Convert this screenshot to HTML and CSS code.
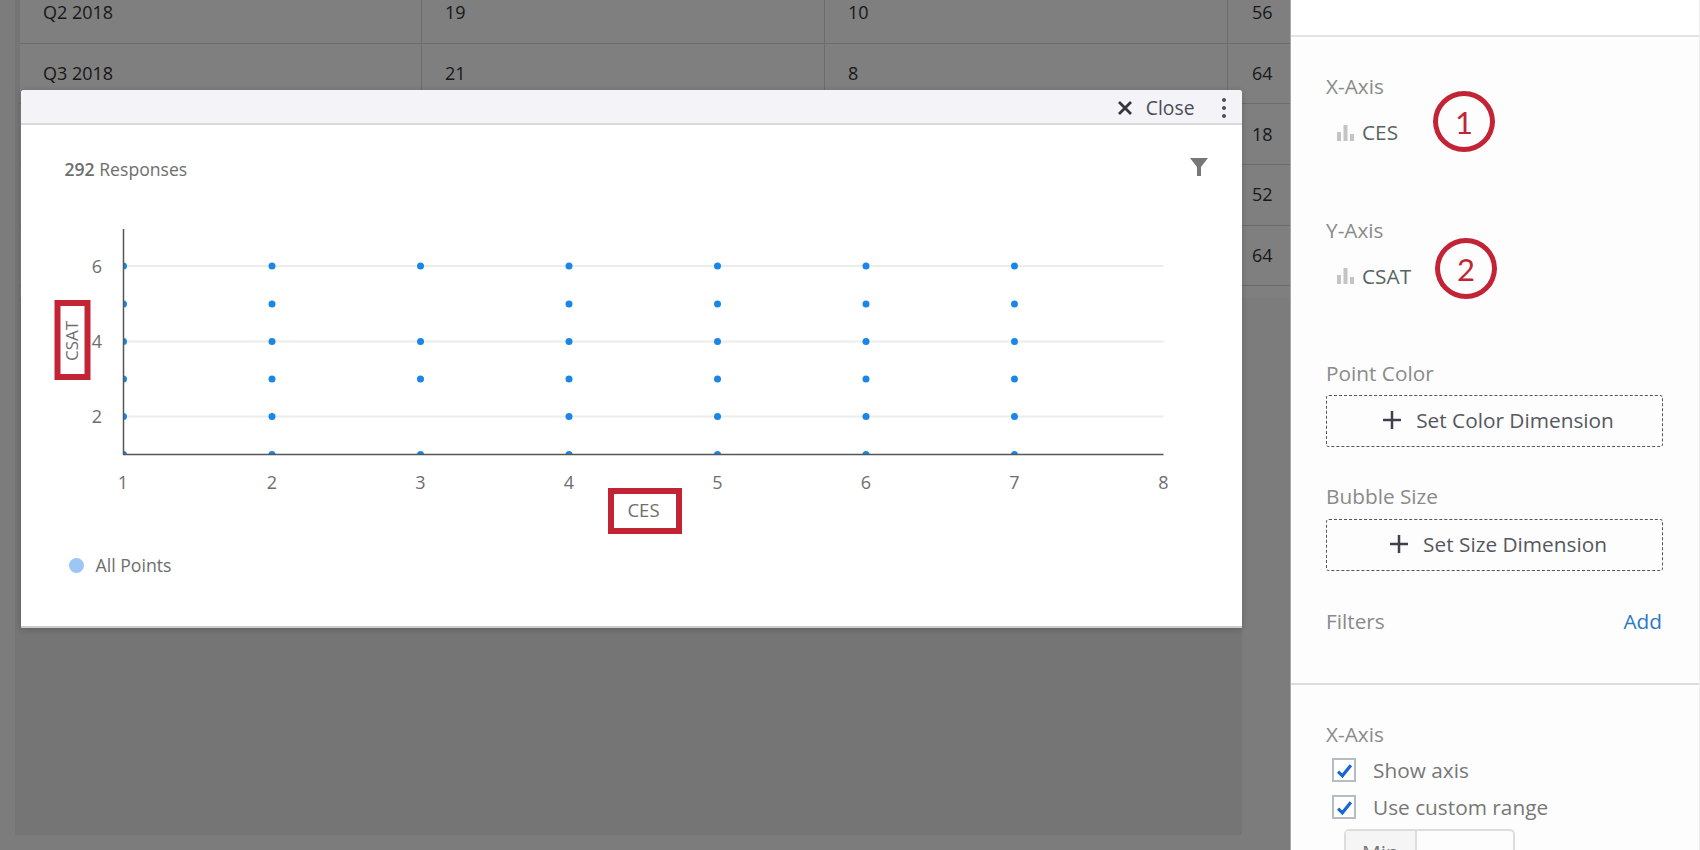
FILE: index.html
```html
<!DOCTYPE html>
<html lang="en">
<head>
<meta charset="utf-8">
<title>Scatter plot</title>
<link rel="stylesheet" href="styles.css">
</head>
<body>
<div class="app">
  <main class="main">
    <div class="content">
      <div class="table">
        <div class="cell">Q2 2018</div><div class="cell">19</div><div class="cell">10</div><div class="cell">56</div>
        <div class="cell">Q3 2018</div><div class="cell">21</div><div class="cell">8</div><div class="cell">64</div>
        <div class="cell"></div><div class="cell"></div><div class="cell"></div><div class="cell">18</div>
        <div class="cell"></div><div class="cell"></div><div class="cell"></div><div class="cell">52</div>
        <div class="cell"></div><div class="cell"></div><div class="cell"></div><div class="cell">64</div>
        <div class="cell short"></div><div class="cell short"></div><div class="cell short"></div><div class="cell short"></div>
      </div>
    </div>
    <div class="overlay"></div>
    <section class="modal">
      <header class="modal-head">
        <svg class="x-icon" viewBox="0 0 14 14"><path d="M1 1l12 12M13 1L1 13"/></svg>
        <span class="close-text">Close</span>
        <svg class="kebab" viewBox="0 0 4 20"><circle cx="2" cy="2" r="2"/><circle cx="2" cy="10" r="2"/><circle cx="2" cy="18" r="2"/></svg>
      </header>
      <div class="modal-body">
        <div class="resp-row">
          <p class="responses"><b>292</b> Responses</p>
          <svg class="funnel" viewBox="0 0 18 18"><path d="M0 0h18l-7 9v9H7V9z"/></svg>
        </div>
        <svg class="chart" viewBox="0 0 1221 370" width="1221" height="370">
          <g class="grid">
            <line x1="102" y1="141" x2="1142.5" y2="141"/>
            <line x1="102" y1="216.5" x2="1142.5" y2="216.5"/>
            <line x1="102" y1="291.5" x2="1142.5" y2="291.5"/>
          </g>
          <defs><clipPath id="plot"><rect x="102" y="100" width="1100" height="229.5"/></clipPath></defs>
          <g class="dots" clip-path="url(#plot)">
            <circle cx="102.5" cy="141" r="3.5"/><circle cx="251" cy="141" r="3.5"/><circle cx="399.5" cy="141" r="3.5"/><circle cx="548" cy="141" r="3.5"/><circle cx="696.5" cy="141" r="3.5"/><circle cx="845" cy="141" r="3.5"/><circle cx="993.5" cy="141" r="3.5"/>
            <circle cx="102.5" cy="179" r="3.5"/><circle cx="251" cy="179" r="3.5"/><circle cx="548" cy="179" r="3.5"/><circle cx="696.5" cy="179" r="3.5"/><circle cx="845" cy="179" r="3.5"/><circle cx="993.5" cy="179" r="3.5"/>
            <circle cx="102.5" cy="216.5" r="3.5"/><circle cx="251" cy="216.5" r="3.5"/><circle cx="399.5" cy="216.5" r="3.5"/><circle cx="548" cy="216.5" r="3.5"/><circle cx="696.5" cy="216.5" r="3.5"/><circle cx="845" cy="216.5" r="3.5"/><circle cx="993.5" cy="216.5" r="3.5"/>
            <circle cx="102.5" cy="254" r="3.5"/><circle cx="251" cy="254" r="3.5"/><circle cx="399.5" cy="254" r="3.5"/><circle cx="548" cy="254" r="3.5"/><circle cx="696.5" cy="254" r="3.5"/><circle cx="845" cy="254" r="3.5"/><circle cx="993.5" cy="254" r="3.5"/>
            <circle cx="102.5" cy="291.5" r="3.5"/><circle cx="251" cy="291.5" r="3.5"/><circle cx="548" cy="291.5" r="3.5"/><circle cx="696.5" cy="291.5" r="3.5"/><circle cx="845" cy="291.5" r="3.5"/><circle cx="993.5" cy="291.5" r="3.5"/>
            <circle cx="102.5" cy="329.5" r="3.5"/><circle cx="251" cy="329.5" r="3.5"/><circle cx="399.5" cy="329.5" r="3.5"/><circle cx="548" cy="329.5" r="3.5"/><circle cx="696.5" cy="329.5" r="3.5"/><circle cx="845" cy="329.5" r="3.5"/><circle cx="993.5" cy="329.5" r="3.5"/>
          </g>
          <g class="axes">
            <line x1="102.5" y1="104" x2="102.5" y2="329.5"/>
            <line x1="102" y1="329.5" x2="1142.5" y2="329.5"/>
          </g>
          <g class="ticks">
            <text x="76" y="147.5">6</text><text x="76" y="223">4</text><text x="76" y="298">2</text>
            <text x="102" y="363.5">1</text><text x="251" y="363.5">2</text><text x="399.5" y="363.5">3</text><text x="548" y="363.5">4</text><text x="696.5" y="363.5">5</text><text x="845" y="363.5">6</text><text x="993.5" y="363.5">7</text><text x="1142.5" y="363.5">8</text>
          </g>
          <text class="axis-title" transform="translate(57 216) rotate(-90)">CSAT</text>
          <rect class="mark" x="36.5" y="178" width="30" height="74"/>
        </svg>
        <div class="ces-box">CES</div>
        <div class="legend"><span class="legend-dot"></span><span>All Points</span></div>
      </div>
    </section>
  </main>
  <aside class="side">
    <div class="side-top"></div>
    <div class="side-data">
      <div class="pick pick-x">
        <h3 class="label">X-Axis</h3>
        <div class="field-row">
          <svg class="bars" viewBox="0 0 17 16"><path d="M0 7h4v9H0zM6.5 0h4v16h-4zM13 9h4v7h-4z"/></svg>
          <span class="field">CES</span>
          <span class="callout callout-1">1</span>
        </div>
      </div>
      <div class="pick pick-y">
        <h3 class="label">Y-Axis</h3>
        <div class="field-row">
          <svg class="bars" viewBox="0 0 17 16"><path d="M0 7h4v9H0zM6.5 0h4v16h-4zM13 9h4v7h-4z"/></svg>
          <span class="field">CSAT</span>
          <span class="callout callout-2">2</span>
        </div>
      </div>
      <h3 class="label">Point Color</h3>
      <button class="dash dash-color"><svg class="plus" viewBox="0 0 18 18"><path d="M9 0v18M0 9h18"/></svg>Set Color Dimension</button>
      <h3 class="label label-bs">Bubble Size</h3>
      <button class="dash dash-size"><svg class="plus" viewBox="0 0 18 18"><path d="M9 0v18M0 9h18"/></svg>Set Size Dimension</button>
      <div class="filters"><h3 class="label">Filters</h3><a class="add">Add</a></div>
    </div>
    <div class="side-axis">
      <h3 class="label">X-Axis</h3>
      <label class="check"><span class="box"><svg viewBox="0 0 16 14"><path d="M2 8l4 4 8-10"/></svg></span>Show axis</label>
      <label class="check"><span class="box"><svg viewBox="0 0 16 14"><path d="M2 8l4 4 8-10"/></svg></span>Use custom range</label>
      <div class="range"><span class="range-key">Min</span><span class="range-val"></span></div>
    </div>
  </aside>
</div>
</body>
</html>
```
FILE: styles.css
```css
* { box-sizing: border-box; }
html, body { margin: 0; height: 850px; overflow: hidden; }
body { font-family: "Open Sans", sans-serif; background: #f6f6f6; }
h3, p { margin: 0; font-weight: 400; }

.app { display: flex; width: 1700px; height: 850px; overflow: hidden; }

.main { position: relative; width: 1291px; height: 850px; overflow: hidden; background: #f8f8f8; }
.content { display: flow-root; margin-left: 15px; width: 1227px; height: 835px; background: #ebebeb; padding-left: 5px; }
.table {
  margin-top: -17px;
  width: 1271px;
  display: grid;
  grid-template-columns: 402px 403px 403px 63px;
  grid-template-rows: repeat(5, 60.7px) 12px;
  background: #fff;
  font-size: 18px;
  color: #333;
}
.cell {
  display: flex; align-items: center;
  padding: 0 0 1px 23px;
  border-bottom: 1px solid #d9d9d9;
  border-right: 1px solid #d9d9d9;
}
.cell:nth-child(4n) { border-right: 0; padding-left: 24px; }
.cell.short { border-bottom: 0; border-right: 0; }

.overlay { position: absolute; inset: 0; background: rgba(0, 0, 0, .5); }

.modal {
  position: absolute; left: 20.5px; top: 90px; width: 1221px; height: 538px;
  background: #fff; border-radius: 3px 3px 0 0;
  border-bottom: 2px solid #ccc;
  box-shadow: 0 1px 6px rgba(0, 0, 0, .2);
}
.modal-head {
  height: 35px; display: flex; align-items: center; justify-content: flex-end;
  background: #f3f3f8; border-bottom: 2px solid #d9d9d9; border-radius: 3px 3px 0 0;
  padding: 3px 16px 0 0;
}
.x-icon { width: 14px; height: 14px; fill: none; stroke: #33363d; stroke-width: 2.8; margin-right: 14px; }
.close-text { font-size: 19.3px; color: #4a4d55; line-height: 1; margin-right: 27px; }
.kebab { width: 4px; height: 20px; fill: #4a4d55; }

.modal-body { position: relative; }
.resp-row { display: flex; justify-content: space-between; padding: 33px 34px 0 44px; height: 100px; }
.responses { font-size: 17.6px; line-height: 23px; color: #6e6e6e; }
.responses b { font-weight: 600; }
.funnel { width: 18px; height: 18px; fill: #777; }
.chart { display: block; overflow: visible; position: absolute; left: 0; top: 0; }
.grid line { stroke: #ececec; stroke-width: 2; }
.dots circle { fill: #1a86e8; }
.axes line { stroke: #555; stroke-width: 1.5; }
.ticks text { font-size: 18px; fill: #6e6e6e; text-anchor: middle; }
.axis-title { font-size: 17px; fill: #6e6e6e; text-anchor: middle; }
.mark { fill: none; stroke: #c32435; stroke-width: 6; }

.ces-box {
  position: absolute; left: 587.5px; top: 363px; width: 74px; height: 46px;
  border: 6px solid #c32435; padding: 0 3px 3px 0;
  display: flex; align-items: center; justify-content: center;
  font-size: 18.5px; color: #6e6e6e;
}
.legend {
  position: absolute; left: 48px; top: 428px;
  display: flex; align-items: center; gap: 12px;
  font-size: 17.7px; line-height: 24px; color: #6e6e6e;
}
.legend-dot { width: 15px; height: 15px; border-radius: 50%; background: #9bc6f5; }

.side { position: relative; width: 409px; height: 850px; background: #fdfdfd; border-right: 1px solid #eee; box-shadow: -1px 0 0 #a8a8a8; }
.side-top { height: 37px; border-bottom: 2px solid #e3e3e3; background: #fff; }
.side-data { height: 648px; border-bottom: 2px solid #dcdcdc; padding: 0 37px 0 35px; }
.label { font-size: 20.8px; line-height: 22px; padding-bottom: 2px; color: #8a8a8a; }
.pick-x { padding-top: 38px; height: 182px; }
.pick-y { height: 143px; }
.field-row { position: relative; display: flex; align-items: center; gap: 8px; margin: 21px 0 0 11px; height: 24px; }
.pick-x .field-row .bars { margin-top: 2px; }
.bars { width: 17px; height: 16px; fill: #c4c4c4; }
.field { font-size: 20.8px; color: #56665f; }
.callout {
  position: absolute; width: 62px; height: 61px; border: 5px solid #c32435; border-radius: 50%;
  display: flex; align-items: center; justify-content: center;
  font-family: Lato, sans-serif; font-size: 31px; color: #c32435;
}
.callout-1 { left: 96px; top: -29px; }
.callout-2 { left: 98px; top: -26px; }
.dash {
  display: flex; align-items: center; justify-content: center;
  width: 337px; height: 52px; margin-top: 9px; padding: 0 0 2px 8px;
  border: 1.5px dashed #555; border-radius: 3px; background: #fdfdfd;
  font: 400 20.8px "Open Sans", sans-serif; color: #55585f;
}
.dash-size { margin-top: 10px; }
.plus { width: 18px; height: 18px; fill: none; stroke: #3f424a; stroke-width: 2.5; margin-right: 15px; }
.label-bs { margin-top: 38px; }
.filters { display: flex; justify-content: space-between; margin-top: 39px; }
.add { font-size: 20.8px; line-height: 22px; color: #2b78c5; }

.side-axis { padding: 38px 0 0 35px; }
.check { display: flex; align-items: center; height: 24px; margin: 0 0 13px 6px; font-size: 20.8px; color: #777; gap: 17px; }
.side-axis .label + .check { margin-top: 11px; }
.box { width: 24px; height: 24px; border: 2px solid #b5bcc5; background: #fff; display: flex; align-items: center; justify-content: center; }
.box svg { width: 17px; height: 15px; fill: none; stroke: #1467d6; stroke-width: 3; }
.range { display: flex; width: 171px; height: 40px; margin: -3px 0 0 18px; border: 2px solid #ddd; border-radius: 5px 5px 0 0; font-size: 20.8px; color: #777; }
.range-key { width: 71px; background: #f5f5f5; border-right: 2px solid #ddd; padding: 7px 0 0 16px; }
```
